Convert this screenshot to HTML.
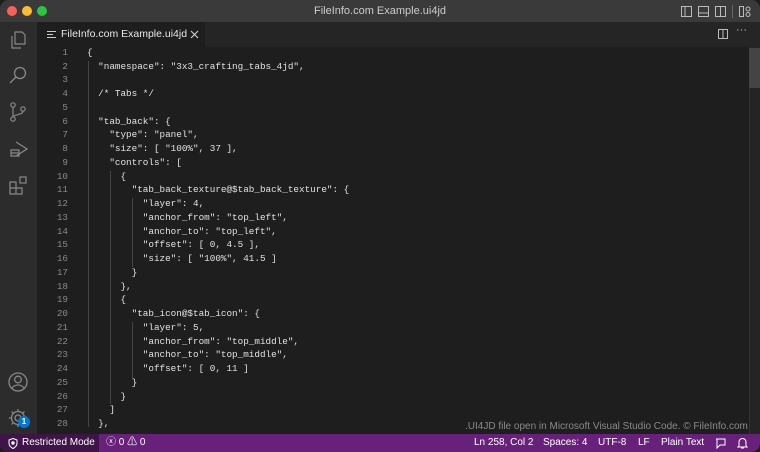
<!DOCTYPE html>
<html><head><meta charset="utf-8"><style>
*{margin:0;padding:0;box-sizing:border-box}
body{width:760px;height:452px;overflow:hidden;background:#1e1e1e;font-family:"Liberation Sans",sans-serif;position:relative}
.title{position:absolute;left:0;top:0;width:760px;height:22px;background:#3a3a3a;border-radius:9px 9px 0 0;color:#ccc;font-size:11px;text-align:center;line-height:22px}
.dot{position:absolute;top:6px;width:10px;height:10px;border-radius:50%}
.act{position:absolute;left:0;top:22px;width:37px;height:412px;background:#2c2c2c}
.tabbar{position:absolute;left:37px;top:22px;width:723px;height:25px;background:#252526}
.tab{position:absolute;left:0;top:0;width:168px;height:25px;background:#1e1e1e;color:#e8e8e8;font-size:10.5px;line-height:25px;padding-left:24px}
.code{position:absolute;left:37px;top:47px;font-family:"Liberation Mono",monospace;font-size:9.3px;color:#e2e2e2;white-space:pre}
.ln{position:absolute;left:0;width:31px;text-align:right;color:#8a8a8a}
.tx{position:absolute;left:50px}
.g{position:absolute;width:1px;background:#444}
.status{position:absolute;left:0;top:434px;width:760px;height:18px;background:#68217a;color:#fff;font-size:10px;line-height:18px;border-radius:0 0 9px 9px}
.rm{position:absolute;left:0;top:0;width:99px;height:18px;background:#3f1549;border-radius:0 0 0 9px;padding-left:22px}
.ic{position:absolute}
</style></head><body>
<div class="title">FileInfo.com Example.ui4jd
<div class="dot" style="left:7px;background:#fe5f57"></div>
<div class="dot" style="left:22px;background:#febc2e"></div>
<div class="dot" style="left:37px;background:#28c840"></div>
<svg class="ic" style="left:680px;top:5px" width="76" height="13" fill="none" stroke="#bbb" stroke-width="1">
<rect x="1.5" y="1.5" width="10" height="10"/><line x1="5" y1="1.5" x2="5" y2="11.5"/>
<rect x="18.5" y="1.5" width="10" height="10"/><line x1="18.5" y1="8" x2="28.5" y2="8"/>
<rect x="35.5" y="1.5" width="10" height="10"/><line x1="40.5" y1="1.5" x2="40.5" y2="11.5"/>
<line x1="52.5" y1="0" x2="52.5" y2="13" stroke="#666"/>
<rect x="59.5" y="1.5" width="4" height="10"/><circle cx="68" cy="4" r="2"/><circle cx="68" cy="9.5" r="2"/></svg>
</div>
<div class="act">
<svg class="ic" style="left:8px;top:8px" width="20" height="20" fill="none" stroke="#888" stroke-width="1.2"><path d="M7 2h7l3 3v9H7z M4 6v12h9"/></svg>
<svg class="ic" style="left:8px;top:43px" width="20" height="20" fill="none" stroke="#888" stroke-width="1.3"><circle cx="12" cy="8" r="5.5"/><path d="M8 12L2 18"/></svg>
<svg class="ic" style="left:8px;top:79px" width="20" height="22" fill="none" stroke="#888" stroke-width="1.2"><circle cx="5" cy="4" r="2.2"/><circle cx="5" cy="18" r="2.2"/><circle cx="15" cy="8" r="2.2"/><path d="M5 6v10M15 10c0 4-8 3-10 6"/></svg>
<svg class="ic" style="left:8px;top:117px" width="20" height="20" fill="none" stroke="#888" stroke-width="1.2"><path d="M8 3l11 7-11 7M3 11h8v6H3zM3 14h8"/></svg>
<svg class="ic" style="left:8px;top:153px" width="20" height="20" fill="none" stroke="#888" stroke-width="1.2"><path d="M2 7h6v6H2zM2 13h6v6H2zM8 13h6v6H8z"/><rect x="12" y="2" width="6" height="6"/></svg>
<svg class="ic" style="left:7px;top:349px" width="22" height="22" fill="none" stroke="#888" stroke-width="1.3"><circle cx="11" cy="11" r="9"/><circle cx="11" cy="8.5" r="3.3"/><path d="M5 17c3-4 9-4 12 0"/></svg>
<svg class="ic" style="left:7px;top:385px" width="22" height="22" fill="none" stroke="#888" stroke-width="1.3"><circle cx="11" cy="11" r="3"/><path d="M11 2v3M11 17v3M2 11h3M17 11h3M4.6 4.6l2.1 2.1M15.3 15.3l2.1 2.1M4.6 17.4l2.1-2.1M15.3 6.7l2.1-2.1"/><circle cx="11" cy="11" r="6.5"/></svg>
<div style="position:absolute;left:18px;top:394px;width:12px;height:12px;border-radius:50%;background:#0078d4;color:#fff;font-size:8px;text-align:center;line-height:12px;font-weight:bold">1</div>
</div>
<div class="tabbar"><div class="tab">FileInfo.com Example.ui4jd
<svg class="ic" style="left:10px;top:8px" width="10" height="9" stroke="#ccc" stroke-width="1"><path d="M0 1.5h9M0 4.5h6M0 7.5h9"/></svg>
<svg class="ic" style="left:153px;top:8px" width="9" height="9" stroke="#ccc" stroke-width="1.2"><path d="M1 1l7 7M8 1L1 8"/></svg>
</div>
<svg class="ic" style="left:680px;top:6px" width="12" height="12" fill="none" stroke="#bbb"><rect x="1.5" y="1.5" width="9" height="9"/><line x1="6" y1="1.5" x2="6" y2="10.5"/></svg>
<div style="position:absolute;left:699px;top:2px;color:#bbb;font-size:11px">···</div>
</div>
<div style="position:absolute;left:749px;top:47px;width:11px;height:387px;background:#242424;border-left:1px solid #333"></div>
<div style="position:absolute;left:749px;top:48px;width:11px;height:40px;background:#444"></div>
<div class="code">
<div class="g" style="left:50.5px;top:14px;height:366px"></div>
<div class="g" style="left:72.5px;top:124px;height:233px"></div>
<div class="g" style="left:94.5px;top:151px;height:69px"></div>
<div class="g" style="left:94.5px;top:275px;height:56px"></div>
</div>
<div class="code" id="c"></div>
<script>
var L=['{','  "namespace": "3x3_crafting_tabs_4jd",','','  /* Tabs */','','  "tab_back": {','    "type": "panel",','    "size": [ "100%", 37 ],','    "controls": [','      {','        "tab_back_texture@$tab_back_texture": {','          "layer": 4,','          "anchor_from": "top_left",','          "anchor_to": "top_left",','          "offset": [ 0, 4.5 ],','          "size": [ "100%", 41.5 ]','        }','      },','      {','        "tab_icon@$tab_icon": {','          "layer": 5,','          "anchor_from": "top_middle",','          "anchor_to": "top_middle",','          "offset": [ 0, 11 ]','        }','      }','    ]','  },'];
var h='';for(var i=0;i<L.length;i++){var t=i*13.74;h+='<div class="ln" style="top:'+t+'px">'+(i+1)+'</div><div class="tx" style="top:'+t+'px">'+L[i].replace(/&/g,'&amp;').replace(/</g,'&lt;')+'</div>';}
document.getElementById('c').innerHTML=h;
</script>
<div style="position:absolute;left:465px;top:421px;color:#8a8a8a;font-size:10px">.UI4JD file open in Microsoft Visual Studio Code. © FileInfo.com</div>
<div class="status">
<div class="rm">Restricted Mode</div>
<svg class="ic" style="left:8px;top:4px" width="10" height="11" fill="none" stroke="#fff" stroke-width="1"><path d="M5 .5L9 2v3c0 3-2 4.5-4 5.5C3 9.5 1 8 1 5V2z"/><circle cx="5" cy="5" r="1.2" fill="#fff"/></svg>
<div style="position:absolute;left:106px;top:0">ⓧ 0 ⚠ 0</div>
<div style="position:absolute;left:474px;top:0">Ln 258, Col 2</div>
<div style="position:absolute;left:543px;top:0">Spaces: 4</div>
<div style="position:absolute;left:598px;top:0">UTF-8</div>
<div style="position:absolute;left:638px;top:0">LF</div>
<div style="position:absolute;left:661px;top:0">Plain Text</div>
<svg class="ic" style="left:715px;top:4px" width="11" height="11" fill="none" stroke="#fff" stroke-width="1"><path d="M1 1h9v6H5l-3 3V1"/></svg>
<svg class="ic" style="left:737px;top:3px" width="11" height="12" fill="none" stroke="#fff" stroke-width="1"><path d="M2 9V5a3.5 3.5 0 017 0v4l1 1H1zM4 11h3"/></svg>
</div>
</body></html>
